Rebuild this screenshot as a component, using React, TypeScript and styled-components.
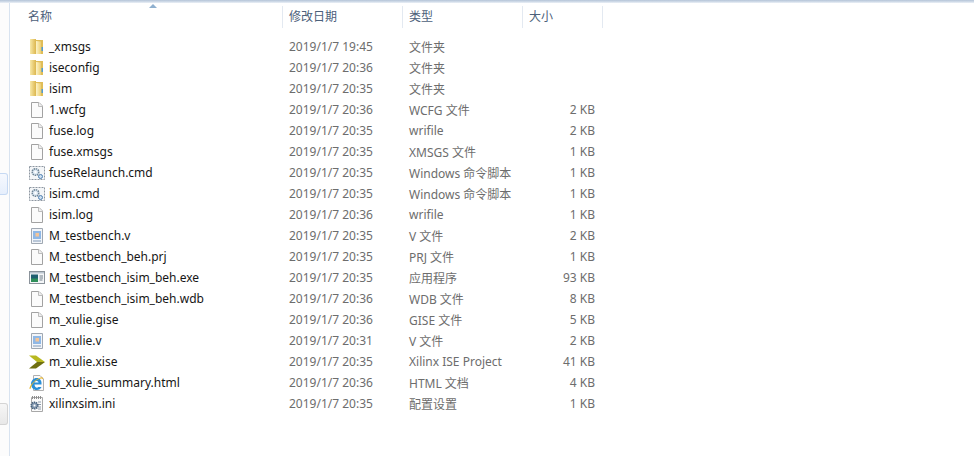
import React from "react";
import styled, { createGlobalStyle } from "styled-components";

const Global = createGlobalStyle`
  html, body { margin: 0; padding: 0; background: #fff; }
  body { font-family: "Noto Sans", "Noto Sans CJK SC", sans-serif; }
`;
const Page = styled.div`
  width: 974px; height: 456px; overflow: hidden; display: flex; flex-direction: column; background: #fff;
`;
const TopBar = styled.div`
  height: 3px; flex: none; background: linear-gradient(#b4c4d8, #d5dfeb 66%, #eef2f7);
`;
const Body = styled.div`display: flex; flex: 1; min-height: 0;`;
const Gutter = styled.div`
  width: 9px; flex: none; background: #fcfcfc; border-right: 1px solid #d8e3f0; display: flex; flex-direction: column; padding-top: 170px; box-sizing: content-box;
`;
const SideTab = styled.div<{ $active?: boolean }>`
  width: 8px; height: 22px; box-sizing: border-box; border: 1px solid ${p => (p.$active ? "#c6d9f3" : "#d4d4d4")}; border-left: 0; border-radius: 0 3px 3px 0;
  background: ${p => (p.$active ? "linear-gradient(#f6f9fe,#e6effc)" : "linear-gradient(#f6f6f6,#e8e8e8)")};
  margin-bottom: ${p => (p.$active ? "208px" : "0")};
`;
const Main = styled.div`flex: 1; min-width: 0; padding-left: 18px; position: relative;`;
const Header = styled.div`
  display: grid; grid-template-columns: 255px 120px 120px 80px; height: 22px; margin-top: 3px; width: 575px; position: relative;
`;
const SortArrow = styled.svg`position: absolute; left: 121px; top: -2px;`;
const HeadCell = styled.div`
  font-size: 12px; line-height: 22px; color: #4c607a; padding-left: 6px; border-right: 1px solid #e3e9f1; box-sizing: border-box; white-space: nowrap;
  &:first-of-type { padding-left: 0; }
`;
const List = styled.div`margin-top: 8px; display: flex; flex-direction: column;`;
const Row = styled.div`
  display: grid; grid-template-columns: 20px 240px 120px 120px 66px; height: 21px; align-items: center; font-size: 12px; white-space: nowrap; margin-left: 1px;
`;
const IconBox = styled.div`width: 16px; height: 16px; display: flex;`;
const Name = styled.div`color: #161616;`;
const Meta = styled.div`color: #6d6d6d;`;
const Size = styled.div`color: #6d6d6d; text-align: right;`;

type Kind = "folder" | "file" | "cmd" | "v" | "exe" | "xise" | "html" | "ini";

const Page16 = ({ children }: { children?: React.ReactNode }) => (
  <svg width="16" height="16" viewBox="0 0 16 16">
    <path d="M2.5.5H10L13.5 4v11.5h-11z" fill="#fbfbfb" stroke="#a2a2a2" />
    <path d="M9.500.5V4.500H13.500" fill="#efefef" stroke="#bcbcbc" />
    {children}
  </svg>
);

const Icon = ({ kind }: { kind: Kind }) => {
  switch (kind) {
    case "folder":
      return (
        <svg width="16" height="16" viewBox="0 0 16 16">
          <defs>
            <linearGradient id="fl" x1="0" y1="0" x2="1" y2="0">
              <stop offset="0" stopColor="#f8e9a8" />
              <stop offset="1" stopColor="#dcb64e" />
            </linearGradient>
            <linearGradient id="fr" x1="0" y1="0" x2="1" y2="0">
              <stop offset="0" stopColor="#fdf4c8" />
              <stop offset="1" stopColor="#eccf73" />
            </linearGradient>
          </defs>
          <path d="M1 0h6v15H1z" fill="url(#fl)" />
          <path d="M7 1h7v14H7z" fill="#e0bd58" />
          <path d="M7 2l5 .5V15H7z" fill="url(#fr)" />
          <path d="M12.500 8h1.500v4h-1.500z" fill="#4f9bd4" />
        </svg>
      );
    case "file":
      return <Page16 />;
    case "cmd":
      return (
        <svg width="16" height="16" viewBox="0 0 16 16">
          <rect x=".5" y="1.500" width="15" height="13" fill="#f4f6f8" stroke="#8d96a0" strokeDasharray="2 1" />
          <circle cx="6.500" cy="7" r="3.300" fill="#dbe7f2" stroke="#6f8596" strokeWidth="1.500" strokeDasharray="1.500 .7" />
          <circle cx="6.500" cy="7" r="1.200" fill="#fff" />
          <circle cx="11.500" cy="11.500" r="2" fill="#cfe0ef" stroke="#4f7fb0" />
        </svg>
      );
    case "v":
      return (
        <svg width="16" height="16" viewBox="0 0 16 16">
          <path d="M2.500.5H13.500V15.500H2.500z" fill="#f2f5f9" stroke="#a0a8b2" />
          <rect x="4" y="3" width="8" height="8" fill="#8fb8e6" />
          <rect x="6.500" y="5" width="3.500" height="3.500" fill="#f3c497" />
          <rect x="4" y="12" width="8" height="2" fill="#b9c7d8" />
        </svg>
      );
    case "exe":
      return (
        <svg width="16" height="16" viewBox="0 0 16 16">
          <rect x=".5" y="1.500" width="15" height="12" fill="#f4f6f8" stroke="#8b939b" />
          <rect x="1" y="2" width="14" height="1.500" fill="#bcc6d0" />
          <rect x="2" y="4.500" width="7" height="7.500" fill="#1f5f70" />
          <rect x="2" y="8.500" width="7" height="3.500" fill="#2f8f5a" />
          <path d="M10.500 6h3.500M10.500 8h3.500M10.500 10h3" stroke="#6f7c88" />
        </svg>
      );
    case "xise":
      return (
        <svg width="16" height="16" viewBox="0 0 16 16">
          <path d="M0 1.500h7L16 8H8z" fill="#b8b820" />
          <path d="M0 14.500h7L16 8H8z" fill="#6f6f10" />
        </svg>
      );
    case "html":
      return (
        <svg width="16" height="16" viewBox="0 0 16 16">
          <path d="M4.500.5H11L14.500 4v11.500h-10z" fill="#fbfbfb" stroke="#b0b0b0" />
          <path d="M2 9.500h10.500C13 5.500 10.800 3 7.700 3 4.500 3 2 5.700 2 9c0 3.400 2.500 6 5.700 6 2.300 0 4-1 4.800-3H9.300c-.8 1.200-3.500.9-3.800-2.500z" fill="#2a8fd8" />
          <path d="M5.500 7.500h4c-.2-2-3.700-2-4 0z" fill="#fff" />
          <path d="M.5 14c-.5-3 5-9.500 11-11.500 2-.6 3 .2 2.500 2-.6-1.500-2.500-1.200-4 -.6C6 5.500 2 10 1.800 13.500z" fill="#e8b62e" />
        </svg>
      );
    case "ini":
      return (
        <svg width="16" height="16" viewBox="0 0 16 16">
          <path d="M2.500 1.500H13.500V15.500H2.500z" fill="#fbfbfb" stroke="#a8a8a8" />
          <path d="M3.500 0v3M5.500 0v3M7.500 0v3M9.500 0v3M11.500 0v3" stroke="#8f8f8f" />
          <path d="M9 6h3M9 8.500h3M9 11h3M9 13h3" stroke="#8a98a8" />
          <circle cx="5.500" cy="9.500" r="3.200" fill="#8ea2b8" stroke="#46607c" strokeWidth="1.800" strokeDasharray="1.300 .7" />
          <circle cx="5.500" cy="9.500" r="1" fill="#fff" />
        </svg>
      );
  }
};

const rows: [Kind, string, string, string, string][] = [
  ["folder", "_xmsgs", "2019/1/7 19:45", "文件夹", ""],
  ["folder", "iseconfig", "2019/1/7 20:36", "文件夹", ""],
  ["folder", "isim", "2019/1/7 20:35", "文件夹", ""],
  ["file", "1.wcfg", "2019/1/7 20:36", "WCFG 文件", "2 KB"],
  ["file", "fuse.log", "2019/1/7 20:35", "wrifile", "2 KB"],
  ["file", "fuse.xmsgs", "2019/1/7 20:35", "XMSGS 文件", "1 KB"],
  ["cmd", "fuseRelaunch.cmd", "2019/1/7 20:35", "Windows 命令脚本", "1 KB"],
  ["cmd", "isim.cmd", "2019/1/7 20:35", "Windows 命令脚本", "1 KB"],
  ["file", "isim.log", "2019/1/7 20:36", "wrifile", "1 KB"],
  ["v", "M_testbench.v", "2019/1/7 20:35", "V 文件", "2 KB"],
  ["file", "M_testbench_beh.prj", "2019/1/7 20:35", "PRJ 文件", "1 KB"],
  ["exe", "M_testbench_isim_beh.exe", "2019/1/7 20:35", "应用程序", "93 KB"],
  ["file", "M_testbench_isim_beh.wdb", "2019/1/7 20:36", "WDB 文件", "8 KB"],
  ["file", "m_xulie.gise", "2019/1/7 20:36", "GISE 文件", "5 KB"],
  ["v", "m_xulie.v", "2019/1/7 20:31", "V 文件", "2 KB"],
  ["xise", "m_xulie.xise", "2019/1/7 20:35", "Xilinx ISE Project", "41 KB"],
  ["html", "m_xulie_summary.html", "2019/1/7 20:36", "HTML 文档", "4 KB"],
  ["ini", "xilinxsim.ini", "2019/1/7 20:35", "配置设置", "1 KB"],
];

export default function App() {
  return (
    <Page>
      <Global />
      <TopBar />
      <Body>
        <Gutter>
          <SideTab $active />
          <SideTab />
        </Gutter>
        <Main>
          <Header>
            <SortArrow width="8" height="4" viewBox="0 0 8 4">
              <path d="M4 0 8 4H0z" fill="#8fb0cf" />
            </SortArrow>
            <HeadCell>名称</HeadCell>
            <HeadCell>修改日期</HeadCell>
            <HeadCell>类型</HeadCell>
            <HeadCell>大小</HeadCell>
          </Header>
          <List>
            {rows.map(([k, n, d, t, s]) => (
              <Row key={n}>
                <IconBox><Icon kind={k} /></IconBox>
                <Name>{n}</Name>
                <Meta>{d}</Meta>
                <Meta>{t}</Meta>
                <Size>{s}</Size>
              </Row>
            ))}
          </List>
        </Main>
      </Body>
    </Page>
  );
}
